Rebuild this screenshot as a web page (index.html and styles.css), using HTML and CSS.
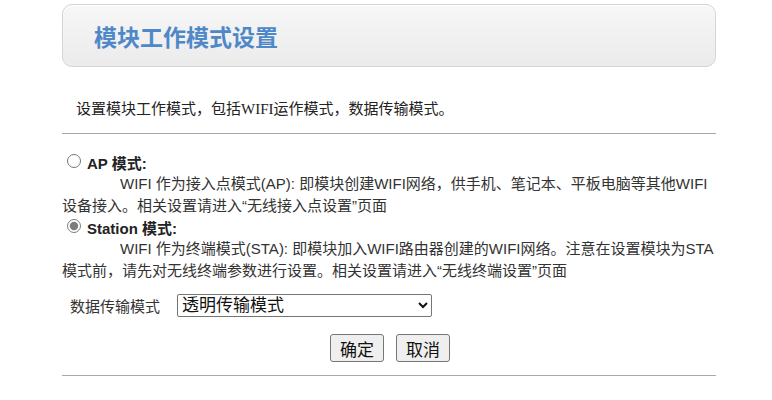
FILE: index.html
```html
<!DOCTYPE html>
<html lang="zh-CN">
<head>
  <meta charset="UTF-8">
  <title>模块工作模式设置</title>
  <link rel="stylesheet" href="styles.css">
</head>
<body>
  <div class="page">
    <div class="title-box">
      <h1>模块工作模式设置</h1>
    </div>

    <p class="intro">设置模块工作模式，包括WIFI运作模式，数据传输模式。</p>
    <hr class="line">

    <form class="mode-form">
      <div class="mode">
        <label class="mode-name"><input type="radio" name="mode" value="ap"> AP 模式:</label>
        <p class="mode-desc">WIFI 作为接入点模式(AP): 即模块创建WIFI网络，供手机、笔记本、平板电脑等其他WIFI设备接入。相关设置请进入“无线接入点设置”页面</p>
      </div>
      <div class="mode">
        <label class="mode-name"><input type="radio" name="mode" value="sta" checked> Station 模式:</label>
        <p class="mode-desc">WIFI 作为终端模式(STA): 即模块加入WIFI路由器创建的WIFI网络。注意在设置模块为STA模式前，请先对无线终端参数进行设置。相关设置请进入“无线终端设置”页面</p>
      </div>

      <div class="trans-row">
        <span class="trans-label">数据传输模式</span>
        <select class="trans-select">
          <option>透明传输模式</option>
          <option>协议传输模式</option>
        </select>
      </div>

      <div class="buttons">
        <button type="button">确定</button>
        <button type="button">取消</button>
      </div>
    </form>
    <hr class="line">
  </div>
</body>
</html>
```

FILE: styles.css
```css
body {
  margin: 0;
  background: #fff;
  font-family: "Liberation Sans", "Noto Sans CJK SC", sans-serif;
  font-size: 15px;
  color: #333;
}

.page {
  width: 654px;
  margin-left: 62px;
  padding-top: 4px;
}

.title-box {
  height: 61px;
  border: 1px solid #d4d4d4;
  border-radius: 10px;
  background: linear-gradient(#f7f7f7, #ebebeb);
  box-shadow: inset 0 1px 1px #fff;
  display: flex;
  align-items: center;
  padding-left: 31px;
}

.title-box h1 {
  margin: 0;
  font-size: 23px;
  font-weight: bold;
  color: #4f88c8;
}

.intro {
  margin: 31px 0 0 14px;
  line-height: 22px;
  font-family: "Liberation Serif", "Noto Sans CJK SC", serif;
  font-size: 15px;
  color: #222;
}

.line {
  margin: 13px 0 0;
  border: none;
  border-top: 1px solid #a9a9a9;
  height: 0;
}

.mode-form {
  margin: 0;
  padding-top: 17px;
}

.mode-name {
  display: flex;
  align-items: center;
  gap: 6px;
  height: 22px;
  padding-left: 5px;
  font-weight: bold;
  color: #222;
}

.mode-name input {
  margin: 0 0 2px;
  width: 14px;
  height: 14px;
  accent-color: #7c7c7c;
}

.mode-desc {
  margin: 0;
  line-height: 21.5px;
  text-indent: 58px;
  color: #333;
}

.trans-row {
  display: flex;
  align-items: center;
  margin-top: 13px;
  padding-left: 8px;
}

.trans-label {
  width: 107px;
  color: #333;
}

.trans-select {
  width: 255px;
  height: 23px;
  font-family: "Liberation Sans", "Noto Sans CJK SC", sans-serif;
  font-size: 17px;
  color: #111;
  border: 1px solid #767676;
  border-radius: 2px;
  background: #fff;
}

.buttons {
  display: flex;
  justify-content: center;
  gap: 12px;
  margin-top: 17px;
  padding-left: 2px;
}

.buttons button {
  height: 28px;
  padding: 0 9px;
  font-family: "Noto Sans CJK SC", sans-serif;
  font-size: 17px;
  line-height: 1;
  color: #111;
  background: #efefef;
  border: 1px solid #767676;
  border-radius: 3px;
}

.buttons + .line {
  margin-top: 18px;
}
```
